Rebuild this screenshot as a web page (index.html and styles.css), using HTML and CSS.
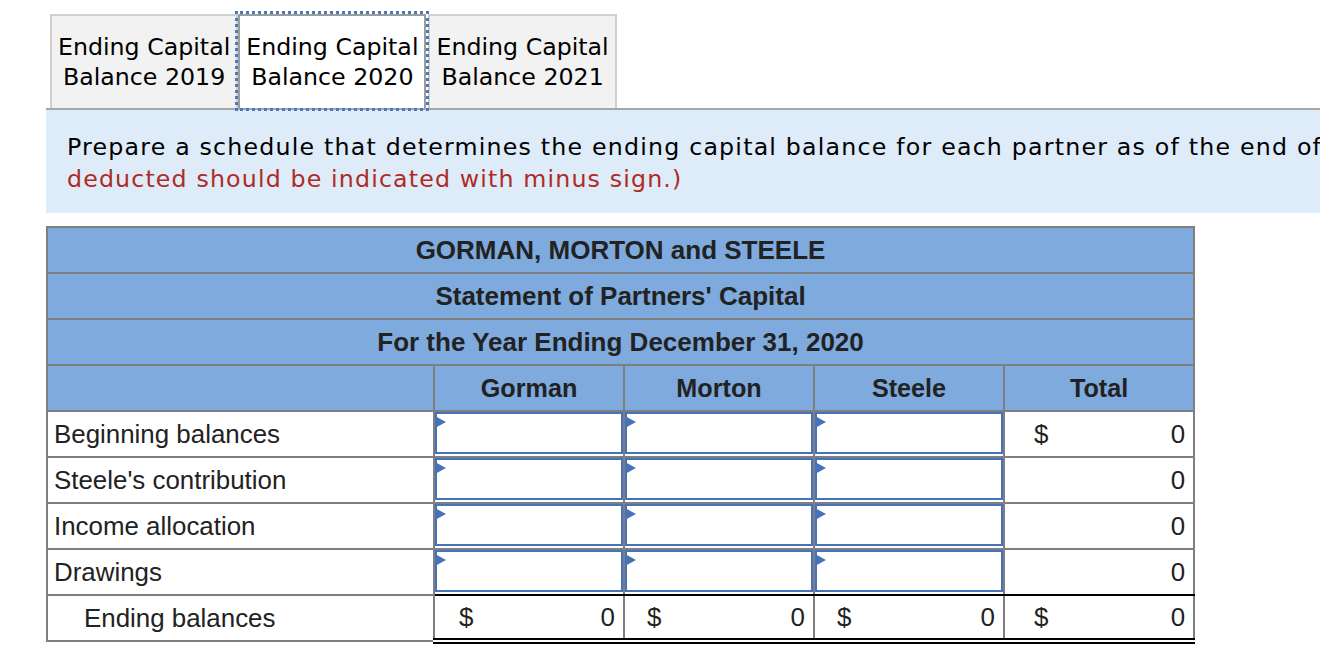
FILE: index.html
```html
<!DOCTYPE html>
<html lang="en">
<head>
<meta charset="utf-8">
<title>Statement of Partners' Capital</title>
<link rel="stylesheet" href="styles.css">
</head>
<body>
<div class="page">
  <div class="tabbar">
    <div class="tab">Ending Capital<br>Balance 2019</div>
    <div class="tab active">Ending Capital<br>Balance 2020</div>
    <div class="tab">Ending Capital<br>Balance 2021</div>
  </div>
  <div class="instructions">
    <p class="line">Prepare a schedule that determines the ending capital balance for each partner as of the end of</p>
    <p class="line red">deducted should be indicated with minus sign.)</p>
  </div>
  <table class="sheet">
    <colgroup>
      <col class="c-label">
      <col class="c-num">
      <col class="c-num">
      <col class="c-num">
      <col class="c-num">
    </colgroup>
    <thead>
      <tr><th class="title" colspan="5">GORMAN, MORTON and STEELE</th></tr>
      <tr><th class="title" colspan="5">Statement of Partners' Capital</th></tr>
      <tr><th class="title" colspan="5">For the Year Ending December 31, 2020</th></tr>
      <tr><th></th><th>Gorman</th><th>Morton</th><th>Steele</th><th>Total</th></tr>
    </thead>
    <tbody>
      <tr>
        <td class="label">Beginning balances</td>
        <td class="in"><div class="box"></div></td>
        <td class="in"><div class="box"></div></td>
        <td class="in"><div class="box"></div></td>
        <td><div class="money total"><span>$</span><span>0</span></div></td>
      </tr>
      <tr>
        <td class="label">Steele's contribution</td>
        <td class="in"><div class="box"></div></td>
        <td class="in"><div class="box"></div></td>
        <td class="in"><div class="box"></div></td>
        <td><div class="money total"><span></span><span>0</span></div></td>
      </tr>
      <tr>
        <td class="label">Income allocation</td>
        <td class="in"><div class="box"></div></td>
        <td class="in"><div class="box"></div></td>
        <td class="in"><div class="box"></div></td>
        <td><div class="money total"><span></span><span>0</span></div></td>
      </tr>
      <tr>
        <td class="label">Drawings</td>
        <td class="in sum-above"><div class="box"></div></td>
        <td class="in sum-above"><div class="box"></div></td>
        <td class="in sum-above"><div class="box"></div></td>
        <td class="sum-above"><div class="money total"><span></span><span>0</span></div></td>
      </tr>
      <tr class="ending">
        <td class="label indent">Ending balances</td>
        <td class="dbl"><div class="money"><span>$</span><span>0</span></div></td>
        <td class="dbl"><div class="money m2"><span>$</span><span>0</span></div></td>
        <td class="dbl"><div class="money m2"><span>$</span><span>0</span></div></td>
        <td class="dbl"><div class="money total"><span>$</span><span>0</span></div></td>
      </tr>
    </tbody>
  </table>
</div>
</body>
</html>
```

FILE: styles.css
```css
html, body {
  margin: 0;
  padding: 0;
  background: #ffffff;
  overflow: hidden;
}

.page {
  padding-left: 46px;
}

.tabbar {
  display: flex;
  align-items: flex-end;
  padding: 14px 0 0 4px;
  border-bottom: 2px solid #a6a6a6;
}

.tab {
  font-family: "DejaVu Sans", Verdana, sans-serif;
  font-size: 23.7px;
  line-height: 30px;
  color: #000;
  text-align: center;
  padding: 16px 6px;
  border: 2px solid #cfcfcf;
  border-bottom: 0;
  background: #f2f2f2;
  white-space: nowrap;
}

.tab.active {
  background: #ffffff;
  border-color: #9c9c9c;
  outline: 3px dotted #4a78c2;
  margin: 0 2px 0 0;
  position: relative;
  z-index: 1;
}

.instructions {
  background: #deebf8;
  padding: 21px 21px 18px;
  font-family: "DejaVu Sans", Verdana, sans-serif;
  font-size: 23.7px;
  line-height: 32px;
  color: #000;
}

.line {
  margin: 0;
  white-space: nowrap;
  letter-spacing: 1.2px;
}

.line.red {
  color: #b02a24;
  letter-spacing: 1.15px;
}

.sheet {
  margin-top: 13px;
  border-collapse: collapse;
  table-layout: fixed;
  width: 1147px;
  font-family: "Liberation Sans", Arial, sans-serif;
  font-size: 25.9px;
  color: #222;
}

.c-label { width: 387px; }
.c-num { width: 190px; }

.sheet th,
.sheet td {
  border: 2px solid #7f7f7f;
  height: 44px;
  padding: 0;
  vertical-align: middle;
}

.sheet th {
  background: #7faade;
  font-weight: bold;
  font-size: 25.2px;
  text-align: center;
  color: #222;
}

.sheet th.title {
  font-size: 26px;
}

.sheet td.label {
  padding-left: 6px;
  text-align: left;
}

.sheet td.indent {
  padding-left: 36px;
}

.sheet .ending td {
  height: 42px;
}

.sheet td.in {
  vertical-align: top;
}

.box {
  height: 38px;
  border: 2px solid #4672b9;
  margin-bottom: 2px;
  background: #fff;
  position: relative;
}

.box::before {
  content: "";
  position: absolute;
  left: -2px;
  top: 2px;
  border-left: 11px solid #4672b9;
  border-top: 6px solid transparent;
  border-bottom: 6px solid transparent;
}

.money {
  display: flex;
  justify-content: space-between;
  padding: 0 8px 0 24px;
}

.money.m2 {
  padding-left: 22px;
}

.money.total {
  padding-left: 29px;
}

.sheet td.sum-above {
  border-bottom: 2px solid #000;
}

.sheet td.dbl {
  border-bottom: 6px double #000;
}
```
